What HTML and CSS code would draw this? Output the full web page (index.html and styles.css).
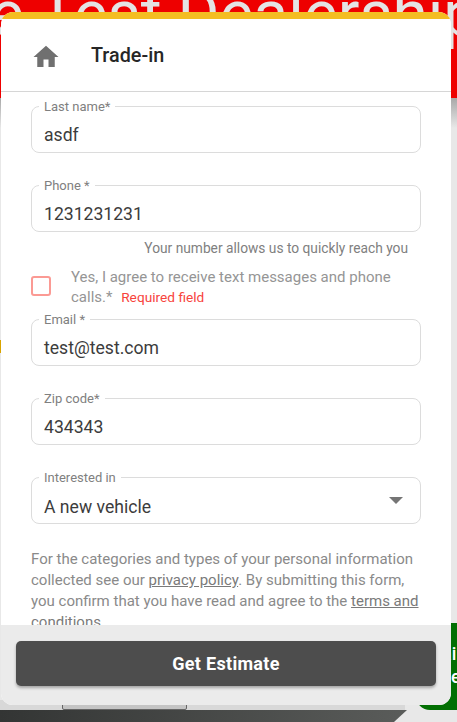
FILE: index.html
```html
<!DOCTYPE html>
<html lang="en">
<head>
<meta charset="utf-8">
<title>Trade-in</title>
<link rel="stylesheet" href="styles.css">
</head>
<body>
<div class="backdrop">
  <div class="banner"><span class="banner-text">e Test Dealership</span></div>
  <div class="shade"></div>
  <div class="mark"></div>
  <div class="green-tab"><span>ai</span><span class="tab-second">e</span></div>
  <div class="strip"></div>
  <div class="ghost-btn"></div>
  <div class="dark-band"></div>
</div>
<main class="dialog">
  <div class="accent"></div>
  <header class="head">
    <svg class="home" viewBox="0 0 24 24"><path d="M10 20v-6h4v6h5v-8h3L12 3 2 12h3v8z"/></svg>
    <h1 class="title">Trade-in</h1>
  </header>
  <div class="body">
    <div class="field"><span class="label">Last name*</span><div class="value">asdf</div></div>
    <div class="field gap"><span class="label">Phone *</span><div class="value">1231231231</div></div>
    <p class="hint">Your number allows us to quickly reach you</p>
    <div class="consent">
      <span class="check"></span>
      <p class="consent-text">Yes, I agree to receive text messages and phone calls.* <span class="error">Required field</span></p>
    </div>
    <div class="field"><span class="label">Email *</span><div class="value">test@test.com</div></div>
    <div class="field gap"><span class="label">Zip code*</span><div class="value">434343</div></div>
    <div class="field gap"><span class="label">Interested in</span><div class="value select">A new vehicle<span class="caret"></span></div></div>
    <p class="legal">For the categories and types of your personal information collected see our <a href="#">privacy policy</a>. By submitting this form, you confirm that you have read and agree to the <a href="#">terms and conditions</a>.</p>
  </div>
  <footer class="foot"><button class="submit" type="button">Get Estimate</button></footer>
</main>
</body>
</html>
```

FILE: styles.css
```css
* { box-sizing: border-box; }
html, body { margin: 0; height: 100%; overflow: hidden; }
body { font-family: Roboto, "Liberation Sans", sans-serif; background: #e8e8e8; }

.backdrop { position: absolute; inset: 0; overflow: hidden; }
.banner { height: 98px; background: #ee0000; overflow: hidden; }
.banner-text {
  display: block;
  margin-top: -23px;
  margin-left: -10px;
  font-size: 64px;
  line-height: 76px;
  color: #e4e4e4;
  white-space: nowrap;
}
.shade { height: 30px; background: linear-gradient(#a8a8a8, #e8e8e8); }
.mark { position: absolute; left: 0; top: 340px; width: 1px; height: 13px; background: #d9a400; }
.green-tab {
  position: absolute; left: 416px; top: 623px; width: 60px; height: 87px;
  background: #026f02; border-radius: 14px; color: #fff;
  font-size: 18px; font-weight: 500; line-height: 23px;
  display: flex; flex-direction: column; padding: 19px 0 0 26px;
}
.tab-second { margin-left: 9px; }
.strip { position: absolute; left: 0; top: 700px; width: 405px; height: 10px; background: #d8d8d8; }
.ghost-btn { position: absolute; left: 62px; top: 700px; width: 125px; height: 10px; background: #c4c4c4; border: 1px solid #666; border-radius: 2px; }
.dark-band {
  position: absolute; left: 0; top: 710px; width: 407px; height: 12px;
  background: linear-gradient(90deg, #333534, #5a5c5a);
  clip-path: polygon(0 0, 100% 0, 96.8% 100%, 0 100%);
}

.dialog {
  position: absolute; left: 1px; top: 12px; width: 450px; height: 693px;
  background: #fff; border-radius: 12px; overflow: hidden;
  display: flex; flex-direction: column;
}
.accent { height: 7px; flex: none; background: #f4bd22; }
.head {
  height: 73px; flex: none; border-bottom: 1px solid #d6d6d6;
  display: flex; align-items: center; gap: 30px; padding: 0 0 0 30px;
}
.home { width: 30px; height: 30px; fill: #707070; flex: none; margin-top: 4px; }
.title { margin: 0; font-size: 19.8px; font-weight: 500; color: #262626; }

.body { flex: 1; min-height: 0; overflow: hidden; padding: 14px 30px 0; }
.field {
  position: relative; height: 47px; padding: 16px 12px 0;
  border: 1px solid #dcdcdc; border-radius: 8px;
}
.gap { margin-top: 32px; }
.label {
  position: absolute; left: 7px; top: -7px; padding: 0 5px;
  font-size: 13px; line-height: 14px; color: #808080; background: #fff;
}
.value { font-size: 17.6px; line-height: 24px; color: #3c3c3c; }
.select { display: flex; justify-content: space-between; align-items: center; padding-top: 1px; }
.caret { width: 0; height: 0; border: 7.5px solid transparent; border-top-color: #757575; border-bottom-width: 0; margin-right: 5px; margin-top: -13px; }
.hint { margin: 7px 0 0; text-align: right; font-size: 13.75px; line-height: 18px; color: #808080; padding-right: 13px; }
.consent { display: flex; align-items: center; gap: 20px; margin: 10px 0 12px; }
.check { width: 20px; height: 20px; flex: none; border: 2px solid #fb9a94; border-radius: 3px; margin-top: -3px; }
.consent-text { margin: 0; font-size: 15px; line-height: 20px; color: #959595; }
.error { color: #f8443c; font-size: 13.7px; margin-left: 5px; }
.legal { margin: 25px 0 0; font-size: 15px; line-height: 21px; color: #8a8a8a; }
.legal a { color: #7a7a7a; }

.foot { flex: none; height: 80px; background: #ebebeb; padding: 16px 15px 0; }
.submit {
  display: block; width: 100%; height: 45px; border: 0; border-radius: 5px;
  background: #4d4d4d; color: #fff; font: 700 18px Roboto, sans-serif; letter-spacing: .3px;
  box-shadow: 0 2px 3px rgba(0,0,0,.3);
}
```
